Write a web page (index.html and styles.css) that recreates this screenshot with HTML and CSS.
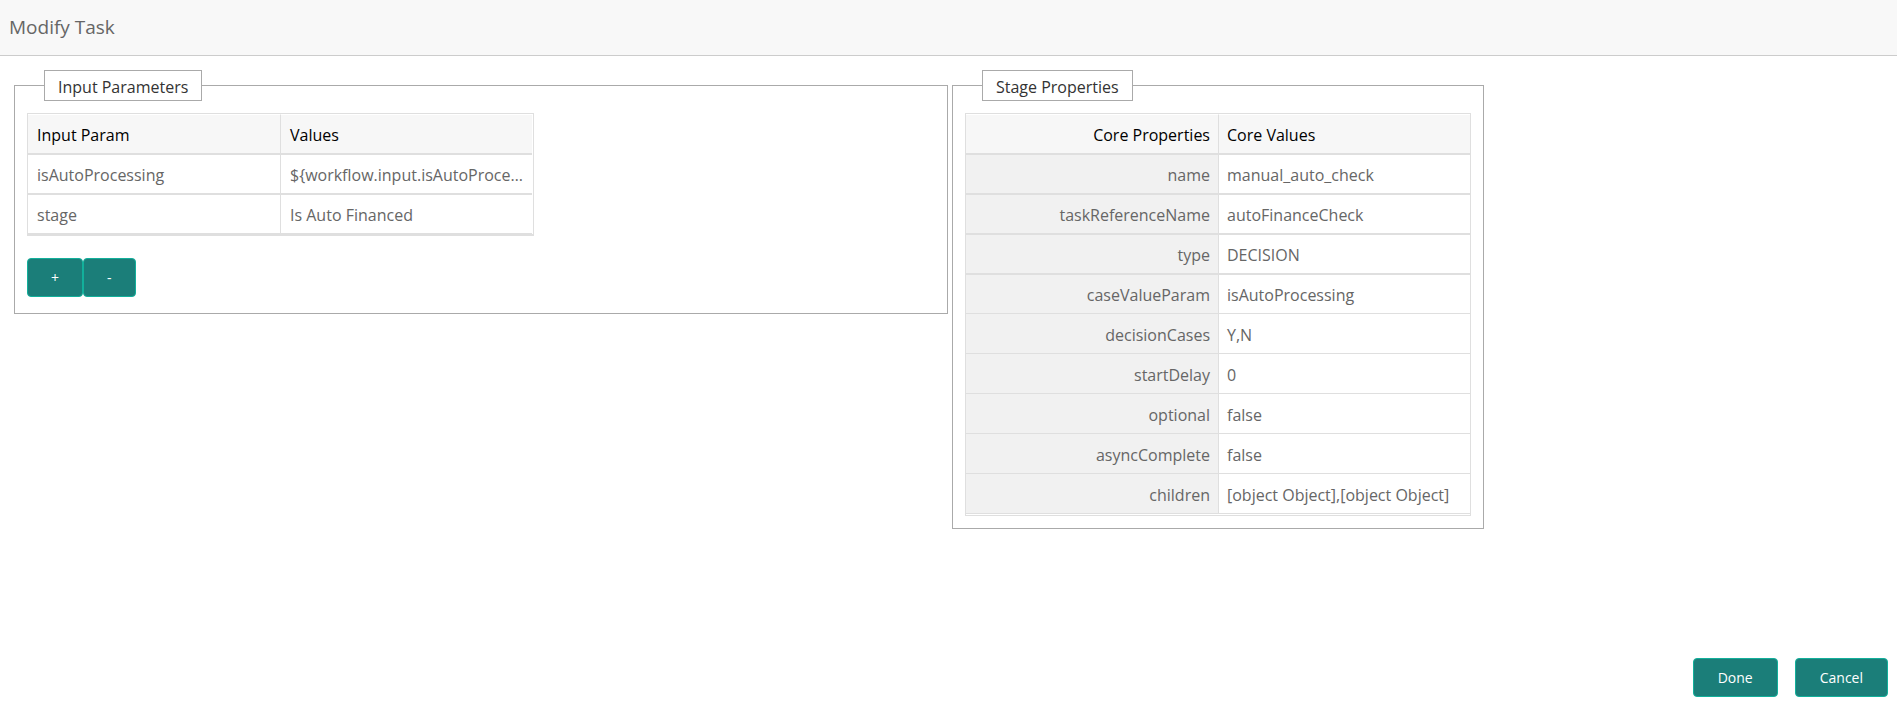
FILE: index.html
```
<!DOCTYPE html>
<html lang="en">
<head>
    <meta charset="UTF-8">
    <meta name="viewport" content="width=device-width, initial-scale=1.0">
    <title>Modify Task</title>
    <link rel="stylesheet" href="styles.css">
</head>
<body>
    <header class="title-bar">
        <h1>Modify Task</h1>
    </header>

    <main class="content">
        <fieldset class="panel">
            <legend>Input Parameters</legend>
            <div class="grid input-grid">
                <table>
                    <thead>
                        <tr><th>Input Param</th><th>Values</th></tr>
                    </thead>
                    <tbody>
                        <tr><td>isAutoProcessing</td><td>${workflow.input.isAutoProcessing}</td></tr>
                        <tr><td>stage</td><td>Is Auto Financed</td></tr>
                    </tbody>
                </table>
            </div>
            <div class="row-buttons">
                <button type="button" class="btn">+</button>
                <button type="button" class="btn">-</button>
            </div>
        </fieldset>

        <fieldset class="panel">
            <legend>Stage Properties</legend>
            <div class="grid stage-grid">
                <table>
                    <thead>
                        <tr><th>Core Properties</th><th>Core Values</th></tr>
                    </thead>
                    <tbody>
                        <tr><td>name</td><td>manual_auto_check</td></tr>
                        <tr><td>taskReferenceName</td><td>autoFinanceCheck</td></tr>
                        <tr><td>type</td><td>DECISION</td></tr>
                        <tr><td>caseValueParam</td><td>isAutoProcessing</td></tr>
                        <tr class="extra"><td>decisionCases</td><td>Y,N</td></tr>
                        <tr class="extra"><td>startDelay</td><td>0</td></tr>
                        <tr class="extra"><td>optional</td><td>false</td></tr>
                        <tr class="extra"><td>asyncComplete</td><td>false</td></tr>
                        <tr class="extra"><td>children</td><td>[object Object],[object Object]</td></tr>
                    </tbody>
                </table>
            </div>
        </fieldset>
    </main>

    <footer class="footer">
        <button type="button" class="btn">Done</button>
        <button type="button" class="btn">Cancel</button>
    </footer>
</body>
</html>
```
FILE: styles.css
```
* {
    box-sizing: border-box;
}
body {
    font-family: "Segoe UI", "Open Sans", "Noto Sans", sans-serif;
    font-size: 16px;
    color: #666;
    background-color: #fff;
    margin: 0;
    min-height: 100vh;
    display: flex;
    flex-direction: column;
}
.title-bar {
    background-color: #f8f8f8;
    border-bottom: 1px solid #ccc;
    padding: 12px 9px 13px;
}
.title-bar h1 {
    margin: 0;
    font-size: 19px;
    font-weight: normal;
    line-height: 30px;
}
.content {
    flex: 1;
    display: grid;
    grid-template-columns: 50% max-content;
    gap: 4px;
    align-items: start;
    padding: 14px 15px 14px 14px;
}
.panel {
    margin: 0;
    min-width: 0;
    padding: 12px;
    border: 1px solid #aaa;
}
.panel legend {
    margin-left: 17px;
    padding: 3px 13px 0;
    border: 1px solid #aaa;
    color: #333;
    line-height: 26px;
}

/* tables */
.grid {
    width: 506px;
    max-width: 100%;
    border: 1px solid #dfdfdf;
    padding-bottom: 1px;
}
.grid table {
    width: 100%;
    table-layout: fixed;
    border-collapse: separate;
    border-spacing: 0;
}
.grid th,
.grid td {
    height: 40px;
    padding: 2px 8px 0;
    border-top: 1px solid #dfdfdf;
    border-bottom: 1px solid #dfdfdf;
    font-weight: normal;
    text-align: left;
    white-space: nowrap;
    overflow: hidden;
    text-overflow: ellipsis;
}
.grid th {
    border-top-color: #fff;
    background-color: #f7f7f7;
    color: #000;
}
.grid .extra td {
    border-top: 0;
}
.grid th + th,
.grid td + td {
    border-left: 1px solid #dfdfdf;
}
.input-grid {
    width: 507px;
    border-bottom-width: 2px;
    padding: 0 1px 0 0;
}
.input-grid th,
.input-grid td {
    padding-left: 9px;
}
.stage-grid th:first-child,
.stage-grid td:first-child {
    text-align: right;
}
.stage-grid td:first-child {
    background-color: #f1f1f1;
}

/* buttons */
.btn {
    height: 39px;
    padding: 0 24px;
    border: 1px solid #12b09b;
    border-radius: 4px;
    background-color: #1b7e79;
    color: #fff;
    font-family: inherit;
    font-size: 14px;
    cursor: pointer;
}
.btn:hover {
    background-color: #166a66;
}
.row-buttons {
    display: flex;
    margin: 22px 0 4px;
}
.row-buttons .btn {
    padding: 0 23px;
}
.footer {
    display: flex;
    justify-content: flex-end;
    gap: 17px;
    padding: 0 9px 9px;
}
```
